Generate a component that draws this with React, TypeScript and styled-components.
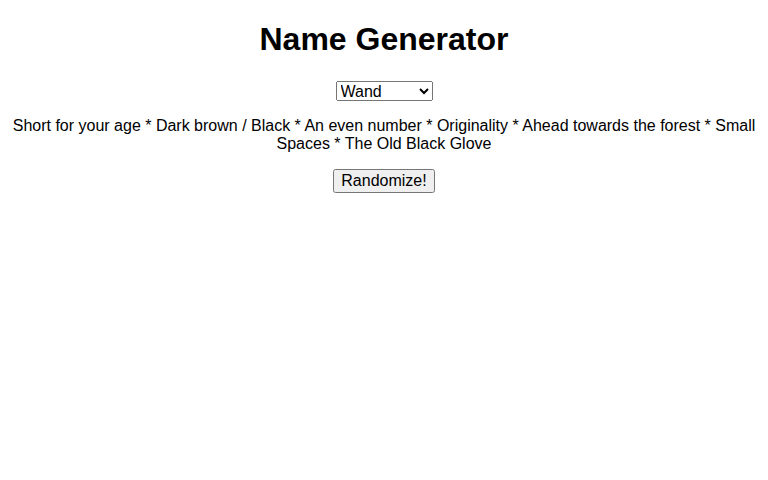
import React, { useState } from 'react';
import styled, { createGlobalStyle } from 'styled-components';

const GlobalStyle = createGlobalStyle`
body {
  margin: 0 8px;
  font-family: "Liberation Sans", Arial, sans-serif;
  color: #000;
  background: #fff;
}
`;

export const Page = styled.div`
text-align: center;
`;

export const Title = styled.h1`
font-size: 32px;
font-weight: bold;
margin: 21.44px 0;
`;

export const Picker = styled.div`
display: flex;
justify-content: center;
`;

export const Select = styled.select`
font-family: "Liberation Sans", Arial, sans-serif;
font-size: 16px;
width: 97px;
height: 20px;
margin-top: 1px;
`;

export const Result = styled.p`
font-size: 16px;
margin: 16px 0;
`;

export const Button = styled.button`
font-family: "Liberation Sans", Arial, sans-serif;
font-size: 16px;
`;

const traits = [
  'Short for your age',
  'Dark brown / Black',
  'An even number',
  'Originality',
  'Ahead towards the forest',
  'Small Spaces',
  'The Old Black Glove',
];

const App: React.FC = () => {
  const [kind, setKind] = useState('Wand');
  return <Page>
    <GlobalStyle />
    <Title>Name Generator</Title>
    <Picker>
      <Select value={kind} onChange={e => setKind(e.target.value)}>
        <option>Wand</option>
        <option>Pet</option>
        <option>House</option>
      </Select>
    </Picker>
    <Result>{traits.join(' * ')}</Result>
    <Button>Randomize!</Button>
  </Page>;
};

export default App;
